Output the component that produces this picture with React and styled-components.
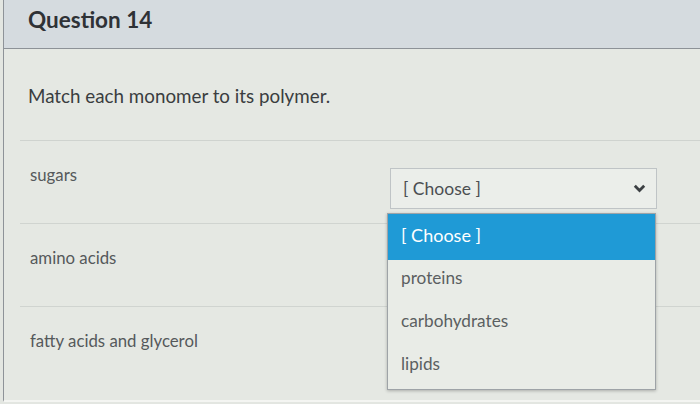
import React from 'react';
import styled, { createGlobalStyle } from 'styled-components';

const GlobalStyle = createGlobalStyle`
  body {
    margin: 0;
    background: #e3e6e1;
    font-family: Lato, "Open Sans", sans-serif;
  }
`;

const Page = styled.div`
  height: 404px;
  padding-left: 3px;
  overflow: hidden;
`;

const Panel = styled.div`
  height: 400px;
  border-left: 1px solid #8e9398;
  border-bottom: 2px solid #f4f5f2;
  background: #e5e8e3;
`;

const Header = styled.div`
  height: 48px;
  padding-left: 24px;
  display: flex;
  align-items: center;
  background: #d5dbdf;
  border-bottom: 1px solid #8d9297;
`;

const Title = styled.h2`
  margin: 0 0 9px;
  font-size: 22.5px;
  font-weight: 700;
  color: #2f3236;
`;

const Prompt = styled.p`
  margin: 0;
  padding: 35px 0 0 24px;
  height: 56px;
  font-size: 18.8px;
  color: #3a3d40;
`;

const Rows = styled.div`
  margin-left: 16px;
  border-top: 1px solid #cfd3cf;
`;

const Row = styled.div`
  position: relative;
  height: 82px;
  display: flex;
  justify-content: space-between;
  align-items: flex-start;
  border-bottom: ${(p) => (p.last ? 'none' : '1px solid #d0d4d0')};
`;

const Label = styled.div`
  padding: 23px 0 0 10px;
  font-size: 16.8px;
  color: #55595b;
`;

const SelectWrap = styled.div`
  position: relative;
  margin: 27px 43px 0 0;
`;

const SelectBox = styled.div`
  width: 267px;
  height: 41px;
  box-sizing: border-box;
  padding: 0 10px 0 12px;
  display: flex;
  align-items: center;
  justify-content: space-between;
  background: #ebeeea;
  border: 1px solid #bfc4c6;
  font-size: 17.5px;
  color: #4b4f52;
`;

const Menu = styled.ul`
  position: absolute;
  top: 45px;
  left: -3px;
  width: 269px;
  box-sizing: border-box;
  margin: 0;
  padding: 0;
  list-style: none;
  background: #e9ece7;
  border: 1px solid #9ea3a7;
  box-shadow: 0 1px 3px rgba(0, 0, 0, 0.25);
  z-index: 2;
`;

const Option = styled.li`
  height: ${(p) => (p.active ? '46px' : '43px')};
  box-sizing: border-box;
  display: flex;
  align-items: center;
  padding: ${(p) => (p.active ? '0 0 4px 13px' : '0 0 8px 13px')};
  font-size: ${(p) => (p.active ? '18px' : '17.2px')};
  color: ${(p) => (p.active ? '#ffffff' : '#5b5f61')};
  background: ${(p) => (p.active ? '#1f9ad6' : 'transparent')};
`;

const Chevron = () => (
  <svg width="13" height="9" viewBox="0 0 13 9">
    <path d="M1.8 1.8 L6.5 6.5 L11.2 1.8" fill="none" stroke="#3c4043" strokeWidth="2.8" />
  </svg>
);

const items = ['sugars', 'amino acids', 'fatty acids and glycerol'];
const options = ['[ Choose ]', 'proteins', 'carbohydrates', 'lipids'];

const App = () => (
  <Page>
    <GlobalStyle />
    <Panel>
      <Header>
        <Title>Question 14</Title>
      </Header>
      <Prompt>Match each monomer to its polymer.</Prompt>
      <Rows>
        {items.map((item, i) => (
          <Row key={item} last={i === items.length - 1}>
            <Label>{item}</Label>
            {i === 0 && (
              <SelectWrap>
                <SelectBox>
                  <span>[ Choose ]</span>
                  <Chevron />
                </SelectBox>
                <Menu>
                  {options.map((opt, j) => (
                    <Option key={opt} active={j === 0}>
                      {opt}
                    </Option>
                  ))}
                </Menu>
              </SelectWrap>
            )}
          </Row>
        ))}
      </Rows>
    </Panel>
  </Page>
);

export default App;
